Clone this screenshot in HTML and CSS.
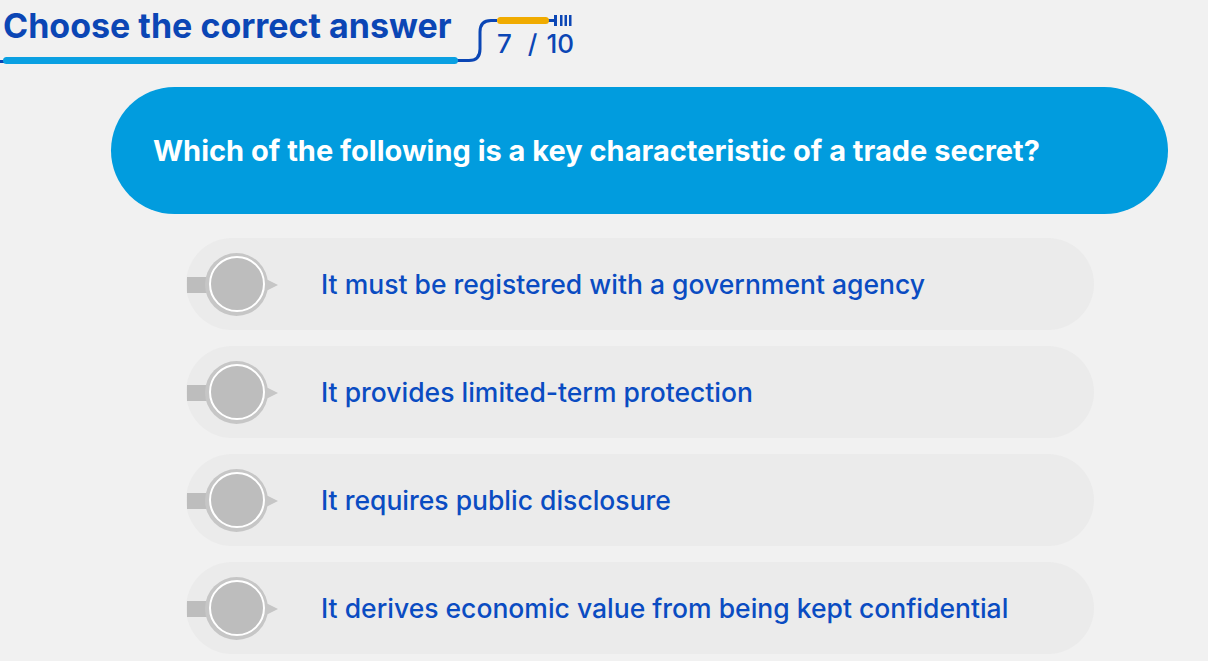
FILE: index.html
```html
<!DOCTYPE html>
<html lang="en">
<head>
<meta charset="utf-8">
<title>Quiz</title>
<link rel="stylesheet" href="styles.css">
</head>
<body>
<div class="page">
  <header class="head">
    <div class="title-col">
      <h1 class="title">Choose the correct answer</h1>
      <div class="underline"><span class="underline-bar"></span></div>
    </div>
    <svg class="connector" width="42" height="66" viewBox="0 0 42 66">
      <path d="M0 60.5 H14 Q25 60.5 25 49 V32 Q25 20.5 36 20.5 H42" fill="none" stroke="#0b46b5" stroke-width="3"/>
    </svg>
    <div class="progress">
      <svg class="progress-bar" width="80" height="30" viewBox="0 0 80 30">
        <line x1="48" y1="20.5" x2="58" y2="20.5" stroke="#0b46b5" stroke-width="3"/>
        <rect x="0" y="17" width="52" height="7" rx="3.5" fill="#f0ab00"/>
        <rect x="57" y="15" width="3" height="11" fill="#0b46b5"/>
        <rect x="63" y="15" width="2.5" height="11" fill="#0b46b5"/>
        <rect x="67.5" y="15" width="2.5" height="11" fill="#0b46b5"/>
        <rect x="72" y="15" width="2.5" height="11" fill="#0b46b5"/>
      </svg>
      <div class="count"><span class="count-cur">7</span><span class="count-sep">/</span><span class="count-total">10</span></div>
    </div>
  </header>

  <section class="question">
    <p class="question-text">Which of the following is a key characteristic of a trade secret?</p>
  </section>

  <ul class="options">
    <li class="option">
      <span class="radio"><span class="radio-tab"></span><span class="radio-ring"><span class="radio-dot"></span></span><span class="radio-tip"></span></span>
      <span class="option-text">It must be registered with a government agency</span>
    </li>
    <li class="option">
      <span class="radio"><span class="radio-tab"></span><span class="radio-ring"><span class="radio-dot"></span></span><span class="radio-tip"></span></span>
      <span class="option-text">It provides limited-term protection</span>
    </li>
    <li class="option">
      <span class="radio"><span class="radio-tab"></span><span class="radio-ring"><span class="radio-dot"></span></span><span class="radio-tip"></span></span>
      <span class="option-text">It requires public disclosure</span>
    </li>
    <li class="option">
      <span class="radio"><span class="radio-tab"></span><span class="radio-ring"><span class="radio-dot"></span></span><span class="radio-tip"></span></span>
      <span class="option-text">It derives economic value from being kept confidential</span>
    </li>
  </ul>
</div>
</body>
</html>
```

FILE: styles.css
```css
* { box-sizing: border-box; }
html, body {
  margin: 0;
  padding: 0;
  background: #f1f1f1;
  font-family: Inter, "Noto Sans", "Liberation Sans", sans-serif;
}
.page {
  width: 1208px;
  height: 661px;
  overflow: hidden;
}
.head {
  display: flex;
  align-items: flex-start;
  height: 66px;
}
.title-col {
  display: flex;
  flex-direction: column;
  width: 455px;
}
.title {
  margin: 0;
  padding: 6px 0 0 3px;
  height: 56px;
  font-size: 34px;
  line-height: 40px;
  font-weight: 700;
  color: #0b46b5;
  letter-spacing: 0;
  white-space: nowrap;
}
.underline {
  position: relative;
  height: 8px;
  margin-top: 1px;
  background: linear-gradient(#0b46b5, #0b46b5) 0 2.5px / 100% 3px no-repeat;
}
.underline-bar {
  display: block;
  margin-left: 3px;
  width: 455px;
  height: 7px;
  border-radius: 4px;
  background: #0aa0e2;
}
.connector { display: block; flex: none; }
.progress {
  display: flex;
  flex-direction: column;
}
.progress-bar { display: block; }
.count {
  display: flex;
  align-items: baseline;
  font-size: 26px;
  line-height: 28px;
  font-weight: 500;
  color: #0b46b5;
  white-space: nowrap;
}
.count-sep { margin: 0 9px 0 16px; }
.question {
  margin: 21px 0 0 111px;
  width: 1057px;
  height: 127px;
  border-radius: 64px;
  background: #019cde;
  display: flex;
  align-items: center;
  padding-left: 42px;
}
.question-text {
  margin: 0;
  font-size: 29px;
  font-weight: 700;
  color: #ffffff;
  letter-spacing: 0;
  white-space: nowrap;
}
.options {
  list-style: none;
  margin: 24px 0 0 186px;
  padding: 0;
  display: flex;
  flex-direction: column;
  gap: 16px;
}
.option {
  width: 908px;
  height: 92px;
  border-radius: 46px;
  background: #ebebeb;
  display: flex;
  align-items: center;
}
.radio {
  position: relative;
  width: 92px;
  height: 63px;
  flex: none;
  display: flex;
  align-items: center;
}
.radio-tab {
  position: absolute;
  left: 1px;
  top: 24px;
  width: 24px;
  height: 16px;
  background: #bdbdbd;
}
.radio-ring {
  position: absolute;
  left: 19px;
  top: 0;
  width: 63px;
  height: 63px;
  border-radius: 50%;
  background: #c6c6c6;
  display: flex;
  align-items: center;
  justify-content: center;
}
.radio-dot {
  width: 56px;
  height: 56px;
  border-radius: 50%;
  border: 2px solid #ffffff;
  background: #bdbdbd;
}
.radio-tip {
  position: absolute;
  left: 80px;
  top: 26px;
  width: 0;
  height: 0;
  border-top: 6px solid transparent;
  border-bottom: 6px solid transparent;
  border-left: 12px solid #c6c6c6;
}
.option-text {
  margin-left: 43px;
  font-size: 26.5px;
  font-weight: 500;
  color: #0a4cc2;
  letter-spacing: 0;
  white-space: nowrap;
}
```
